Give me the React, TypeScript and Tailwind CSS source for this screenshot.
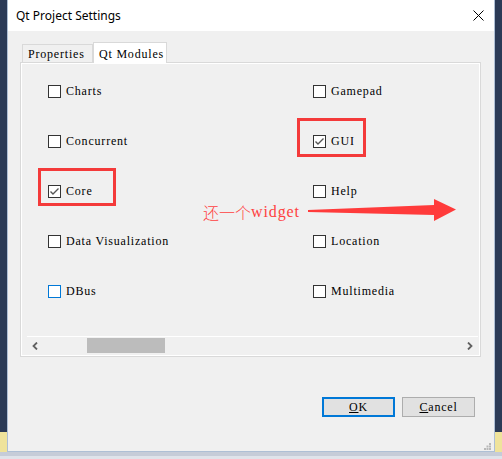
import React from "react";

const mono =
  "font-[family-name:'Liberation_Serif','Times_New_Roman',serif] text-[12px] tracking-[0.8px] text-black";

type Item = { label: string; checked?: boolean; focus?: boolean };

const left: Item[] = [
  { label: "Charts" },
  { label: "Concurrent" },
  { label: "Core", checked: true },
  { label: "Data Visualization" },
  { label: "DBus", focus: true },
];

const right: Item[] = [
  { label: "Gamepad" },
  { label: "GUI", checked: true },
  { label: "Help" },
  { label: "Location" },
  { label: "Multimedia" },
];

function CheckBox({ checked, focus }: { checked?: boolean; focus?: boolean }) {
  return (
    <span
      className={
        "flex h-[13px] w-[13px] shrink-0 items-center justify-center border bg-white " +
        (focus ? "border-[#0078d7]" : "border-[#333333]")
      }
    >
      {checked && (
        <svg width="11" height="11" viewBox="0 0 11 11">
          <path d="M1.5 5.5 L4 8 L9.5 2.5" fill="none" stroke="#555" strokeWidth="1.4" />
        </svg>
      )}
    </span>
  );
}

function Row({ item }: { item: Item }) {
  return (
    <div className="flex h-[50px] items-center gap-[5px] pt-px">
      <CheckBox checked={item.checked} focus={item.focus} />
      <span className={mono + " leading-[13px]"}>{item.label}</span>
    </div>
  );
}

export default function App() {
  const rows = left.map((l, i) => [l, right[i]]);
  return (
    <div className="relative h-[459px] w-[502px] overflow-hidden bg-[#2b3a56]">
      {/* desktop behind the dialog */}
      <div className="absolute left-0 right-0 top-[432px] h-[20px] bg-[#efe39b]" />
      <div className="absolute bottom-0 left-0 right-0 top-[452px] bg-[#c6ccd8]" />
      <div className="absolute bottom-0 left-0 right-0 h-[3px] bg-[#dfe3ea]" />

      <div className="relative ml-[7px] flex h-[452px] w-[488px] flex-col border-x border-b border-[#aebfd5] bg-[#f0f0f0]">
        <div className="flex h-[31px] items-center justify-between bg-white pl-[8px] pr-[10px]">
          <span className="font-[family-name:'Noto_Sans','Liberation_Sans',sans-serif] text-[12px] text-black">
            Qt Project Settings
          </span>
          <svg width="11" height="11" viewBox="0 0 11 11">
            <path d="M0.5 0.5 L10.5 10.5 M10.5 0.5 L0.5 10.5" stroke="#000" strokeWidth="1" />
          </svg>
        </div>

        <div className="flex flex-col pl-[12px] pt-[11px]">
          <div className="flex items-end pl-[2px]">
            <div className="flex h-[18px] w-[71px] items-center border border-b-0 border-[#d9d9d9] bg-[#f0f0f0] pl-[5px]">
              <span className={mono}>Properties</span>
            </div>
            <div className="relative z-10 -mb-px flex h-[21px] w-[74px] items-start border border-b-0 border-[#d9d9d9] bg-white pl-[5px] pt-[2px]">
              <span className={mono}>Qt Modules</span>
            </div>
          </div>

          <div className="h-[295px] w-[461px] border border-[#d9d9d9] bg-white p-px">
            <div className="flex h-full flex-col bg-[#f0f0f0]">
              <div className="grid grid-cols-[265px_1fr] pl-[26px] pt-[2px]">
                {rows.map(([l, r]) => (
                  <React.Fragment key={l.label}>
                    <Row item={l} />
                    <Row item={r} />
                  </React.Fragment>
                ))}
              </div>
              <div className="mb-[1px] ml-[5px] mr-[1px] mt-auto flex h-[18px] border-t border-white">
                <div className="flex w-[17px] items-center justify-center">
                  <svg width="7" height="8" viewBox="0 0 7 8">
                    <path d="M5 0.5 L1.5 4 L5 7.5" fill="none" stroke="#606060" strokeWidth="1.8" />
                  </svg>
                </div>
                <div className="flex-1 py-px">
                  <div className="ml-[43px] h-full w-[78px] bg-[#bcbcbc]" />
                </div>
                <div className="flex w-[17px] items-center justify-center">
                  <svg width="7" height="8" viewBox="0 0 7 8">
                    <path d="M2 0.5 L5.5 4 L2 7.5" fill="none" stroke="#606060" strokeWidth="1.8" />
                  </svg>
                </div>
              </div>
            </div>
          </div>
        </div>

        <div className="mt-[40px] flex justify-end gap-[7px] pr-[19px]">
          <button className="flex h-[20px] w-[73px] items-center justify-center border-2 border-[#0078d7] bg-[#e1e1e1]">
            <span className={mono}>
              <span className="underline">O</span>K
            </span>
          </button>
          <button className="flex h-[20px] w-[73px] items-center justify-center border border-[#adadad] bg-[#e1e1e1]">
            <span className={mono}>
              <span className="underline">C</span>ancel
            </span>
          </button>
        </div>

        <svg className="absolute bottom-[1px] right-[3px]" width="7" height="7" viewBox="0 0 7 7">
          <rect x="5" y="0" width="2" height="2" fill="#b8b8b8" />
          <rect x="2.5" y="2.5" width="2" height="2" fill="#b8b8b8" />
          <rect x="5" y="2.5" width="2" height="2" fill="#b8b8b8" />
          <rect x="0" y="5" width="2" height="2" fill="#b8b8b8" />
          <rect x="2.5" y="5" width="2" height="2" fill="#b8b8b8" />
          <rect x="5" y="5" width="2" height="2" fill="#b8b8b8" />
        </svg>
      </div>

      {/* red annotations */}
      <div className="pointer-events-none absolute left-[38px] top-[168px] h-[38px] w-[78px] border-[3px] border-[#f43a3a]" />
      <div className="pointer-events-none absolute left-[297px] top-[118px] h-[39px] w-[69px] border-[3px] border-[#f43a3a]" />
      <div className="pointer-events-none absolute left-[203px] top-[203px] flex items-center text-[16px] leading-[18px] text-[#ff4040]">
        <span className="font-[family-name:'Noto_Sans_CJK_SC',sans-serif] font-light">还一个</span>
        <span className="font-[family-name:'Liberation_Serif',serif] tracking-[0.9px]">widget</span>
      </div>
      <svg className="pointer-events-none absolute left-0 top-0" width="502" height="459">
        <polygon
          points="308,210 434,205 434,199 456,209.5 434,221 434,215 308,212"
          fill="#ff3b3b"
        />
      </svg>
    </div>
  );
}
